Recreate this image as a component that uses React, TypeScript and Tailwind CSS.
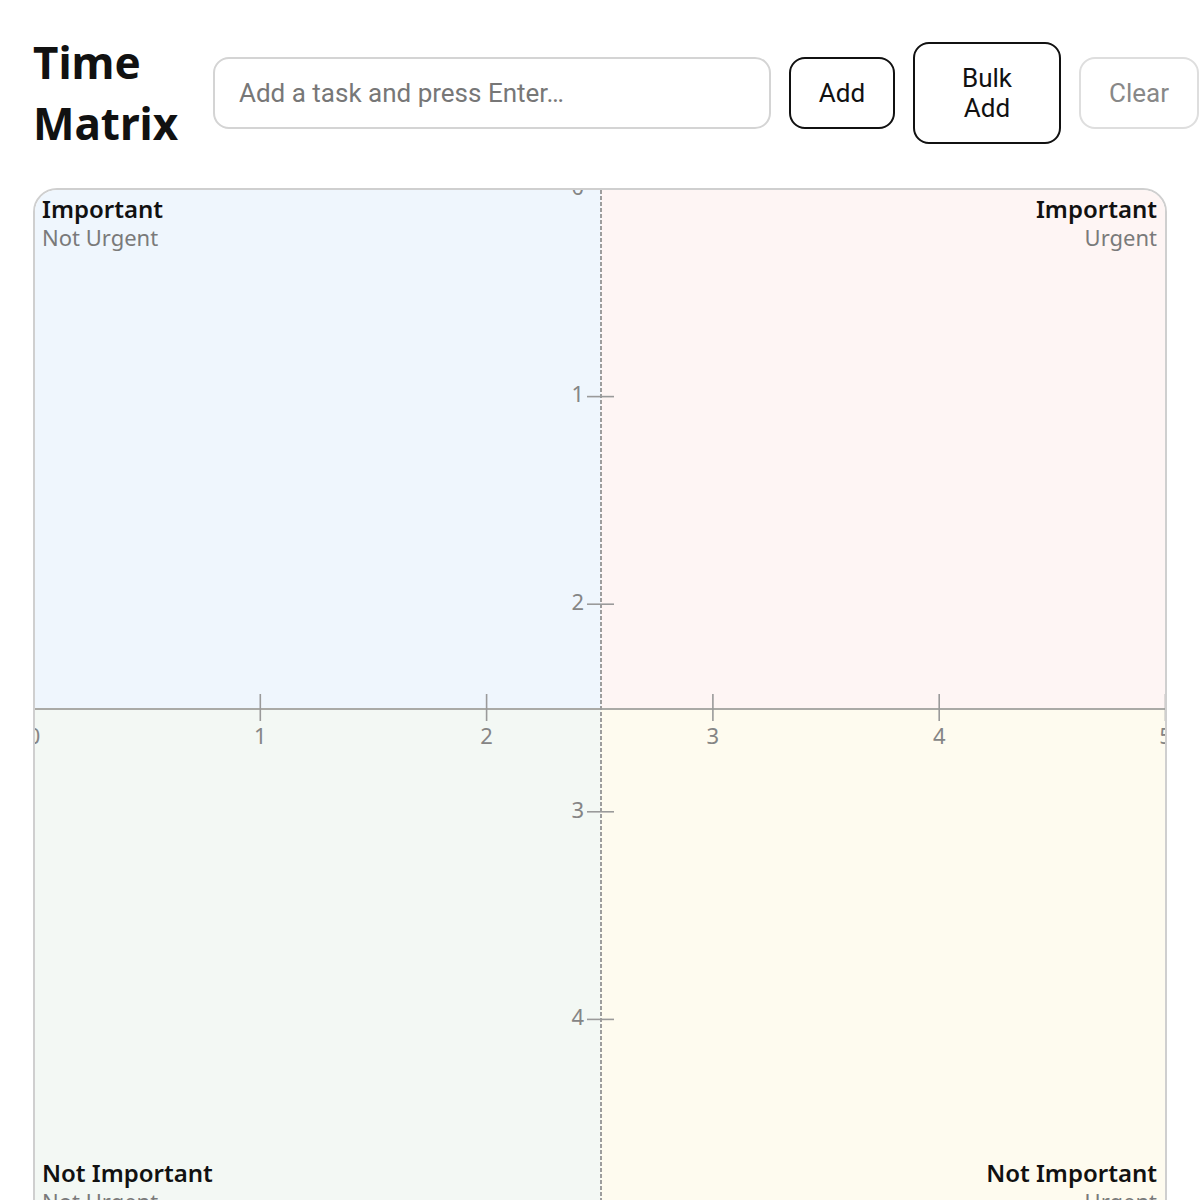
import React from "react";

const W = 1130;
const H = 1038;
const XSTEP = 226.3;
const YSTEP = 207.6;
const AX = 566; // vertical axis x
const AY = 519; // horizontal axis y

function Axes() {
  const xs = [0, 1, 2, 3, 4, 5];
  const ys = [0, 1, 2, 3, 4];
  return (
    <svg
      className="absolute inset-0 pointer-events-none"
      width={W}
      height={H}
      viewBox={`0 0 ${W} ${H}`}
    >
      <line x1={0} y1={AY} x2={W} y2={AY} stroke="#aaaaa6" strokeWidth={2} />
      <line x1={AX} y1={0} x2={AX} y2={H} stroke="#9d9d9d" strokeWidth={2} strokeDasharray="4 2" />
      {xs.map((i) => {
        const x = i * XSTEP - 1;
        return (
          <g key={`x${i}`}>
            <line x1={x} y1={AY - 15} x2={x} y2={AY + 12} stroke="#9a9a9a" strokeWidth={1.6} />
            <text
              x={x}
              y={AY + 29}
              textAnchor="middle"
              dominantBaseline="middle"
              fill="#858585"
              style={{ fontFamily: '"Noto Sans", sans-serif', fontSize: 22 }}
            >
              {i}
            </text>
          </g>
        );
      })}
      {ys.map((i) => {
        const y = i * YSTEP - 1;
        return (
          <g key={`y${i}`}>
            <line x1={AX - 14} y1={y} x2={AX + 13} y2={y} stroke="#9a9a9a" strokeWidth={1.6} />
            <text
              x={AX - 17}
              y={y}
              textAnchor="end"
              dominantBaseline="middle"
              fill="#858585"
              style={{ fontFamily: '"Noto Sans", sans-serif', fontSize: 22 }}
            >
              {i}
            </text>
          </g>
        );
      })}
    </svg>
  );
}

function Label({ title, sub, right }: { title: string; sub: string; right?: boolean }) {
  return (
    <div className={right ? "text-right" : "text-left"}>
      <div className="text-[24px] leading-[29px] font-semibold text-[#111]">{title}</div>
      <div className="text-[22px] leading-[29px] text-[#7a7a7a]">{sub}</div>
    </div>
  );
}

export default function App() {
  return (
    <div
      className="bg-white min-h-[1200px] pt-8 pl-[33px]"
      style={{ fontFamily: '"Noto Sans", sans-serif' }}
    >
      <div className="flex items-center w-[1200px]">
        <h1 className="text-[44px] leading-[61px] font-bold text-[#111] w-[150px] mr-[30px]">
          Time Matrix
        </h1>
        <input
          type="text"
          placeholder="Add a task and press Enter…"
          className="w-[558px] h-[72px] rounded-2xl border-2 border-[#d4d4d4] px-[24px] text-[26px] placeholder:text-[#777] outline-none"
          style={{ fontFamily: 'Roboto, sans-serif' }}
        />
        <button
          className="ml-[18px] w-[106px] h-[72px] rounded-2xl border-2 border-[#111] text-[26px] text-[#111] bg-white"
          style={{ fontFamily: 'Roboto, sans-serif' }}
        >
          Add
        </button>
        <button
          className="ml-[18px] w-[148px] h-[102px] rounded-2xl border-2 border-[#111] text-[26px] leading-[30px] text-[#111] bg-white"
          style={{ fontFamily: 'Roboto, sans-serif' }}
        >
          Bulk
          <br />
          Add
        </button>
        <button
          className="ml-[18px] w-[120px] h-[72px] rounded-2xl border-2 border-[#dedede] text-[26px] text-[#888] bg-white shrink-0"
          style={{ fontFamily: 'Roboto, sans-serif' }}
        >
          Clear
        </button>
      </div>

      <div className="mt-[34px] w-[1134px] h-[1042px] rounded-3xl border-2 border-[#cfcfcf] overflow-hidden">
        <div className="relative w-[1130px] h-[1038px]">
          <div className="grid grid-cols-[566px_564px] grid-rows-[519px_519px] h-full">
            <div className="bg-[#eff6fd] pl-[7px] pt-[4px]">
              <Label title="Important" sub="Not Urgent" />
            </div>
            <div className="bg-[#fef5f4] pr-[8px] pt-[4px]">
              <Label title="Important" sub="Urgent" right />
            </div>
            <div className="bg-[#f3f8f4] pl-[7px] pb-[12px] flex flex-col justify-end">
              <Label title="Not Important" sub="Not Urgent" />
            </div>
            <div className="bg-[#fefbef] pr-[8px] pb-[12px] flex flex-col justify-end">
              <Label title="Not Important" sub="Urgent" right />
            </div>
          </div>
          <Axes />
        </div>
      </div>
    </div>
  );
}
